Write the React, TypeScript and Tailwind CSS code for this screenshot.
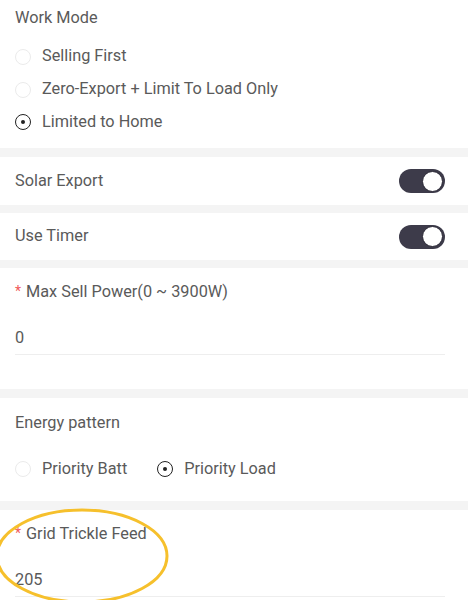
import React from "react";

const font = { fontFamily: "Roboto, 'Noto Sans', sans-serif" };

const Radio = ({ checked, label }: { checked?: boolean; label: string }) => (
  <div className="flex items-center gap-[11px]">
    {checked ? (
      <div className="w-4 h-4 rounded-full border-[1.5px] border-[#222] flex items-center justify-center">
        <div className="w-[4px] h-[4px] rounded-full bg-[#222]"></div>
      </div>
    ) : (
      <div className="w-4 h-4 rounded-full border border-[#ebebeb]"></div>
    )}
    <span>{label}</span>
  </div>
);

const Toggle = () => (
  <div className="w-[46px] h-[24px] rounded-full bg-[#3d3b4a] flex items-center justify-end px-[2px]">
    <div className="w-[21px] h-[21px] rounded-full bg-white border-[1.5px] border-[#2a2835]"></div>
  </div>
);

const Band = ({ h }: { h: string }) => <div className={`w-full bg-[#f4f4f4] ${h}`}></div>;

const App = () => {
  return (
    <div className="relative w-[468px] h-[600px] overflow-hidden bg-white text-[16.3px] text-[#5a5a5a]" style={font}>
      <div className="px-[15px] pt-[6px] pb-[10px]">
        <div className="h-6 leading-6">Work Mode</div>
        <div className="mt-[10px] flex flex-col">
          <div className="h-[33px] flex items-center">
            <Radio label="Selling First" />
          </div>
          <div className="h-[33px] flex items-center">
            <Radio label="Zero-Export + Limit To Load Only" />
          </div>
          <div className="h-[32px] flex items-center">
            <Radio checked label="Limited to Home" />
          </div>
        </div>
      </div>
      <Band h="h-[9px]" />
      <div className="h-[48px] px-[15px] pr-[23px] flex items-center justify-between">
        <span>Solar Export</span>
        <Toggle />
      </div>
      <Band h="h-[8px]" />
      <div className="h-[47px] px-[15px] pr-[23px] flex items-center justify-between">
        <span>Use Timer</span>
        <Toggle />
      </div>
      <Band h="h-[8px]" />
      <div className="pl-[15px] pr-[23px] pt-3 pb-[34px]">
        <div className="h-6 leading-6 flex items-center gap-[5px]">
          <span className="text-[#f05a5a] text-[14px] -mt-[3px]">*</span>
          <span>Max Sell Power(0 ~ 3900W)</span>
        </div>
        <div className="mt-[22px] h-[29px] leading-6 border-b border-[#eeeeee]">0</div>
      </div>
      <Band h="h-[9px]" />
      <div className="px-[15px] pt-[13px] pb-[20px]">
        <div className="h-6 leading-6">Energy pattern</div>
        <div className="mt-[22px] h-6 flex items-center gap-[30px]">
          <Radio label="Priority Batt" />
          <Radio checked label="Priority Load" />
        </div>
      </div>
      <Band h="h-[9px]" />
      <div className="pl-[15px] pr-[23px] pt-[12px]">
        <div className="h-6 leading-6 flex items-center gap-[5px]">
          <span className="text-[#f05a5a] text-[14px] -mt-[3px]">*</span>
          <span>Grid Trickle Feed</span>
        </div>
        <div className="mt-[22px] h-[29px] leading-6 border-b border-[#eeeeee]">205</div>
      </div>
      <svg className="absolute left-0 top-0 pointer-events-none" width="468" height="600">
        <ellipse cx="82" cy="556" rx="85" ry="46" fill="none" stroke="#f6c02c" strokeWidth="3" />
      </svg>
    </div>
  );
};

export default App;
